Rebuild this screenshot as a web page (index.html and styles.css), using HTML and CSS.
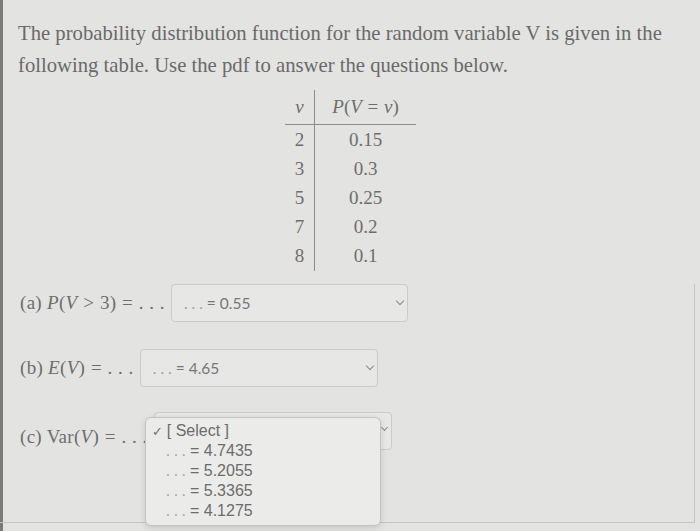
FILE: index.html
```html
<!DOCTYPE html>
<html>
<head>
<meta charset="utf-8">
<link rel="stylesheet" href="styles.css">
</head>
<body>
<div class="page">
  <p class="intro">The probability distribution function for the random variable V is given in the following table. Use the pdf to answer the questions below.</p>
  <table class="pdf">
    <tr class="head"><td class="vcol"><i>v</i></td><td class="pcol"><i>P</i>(<i>V</i><span class="rel">=</span><i>v</i>)</td></tr>
    <tr><td class="vcol">2</td><td class="pcol">0.15</td></tr>
    <tr><td class="vcol">3</td><td class="pcol">0.3</td></tr>
    <tr><td class="vcol">5</td><td class="pcol">0.25</td></tr>
    <tr><td class="vcol">7</td><td class="pcol">0.2</td></tr>
    <tr><td class="vcol">8</td><td class="pcol">0.1</td></tr>
  </table>
  <div class="quiz">
    <div class="q qa">
      <span class="label">(a) <i>P</i>(<i>V</i><span class="rel">&gt;</span>3)<span class="rel">=</span><span class="ld">. . .</span></span>
      <div class="select sa"><span class="val"><span class="dots">. . .</span> = 0.55</span><span class="chev"></span></div>
    </div>
    <div class="q qb">
      <span class="label">(b) <i>E</i>(<i>V</i>)<span class="rel">=</span><span class="ld">. . .</span></span>
      <div class="select sb"><span class="val"><span class="dots">. . .</span> = 4.65</span><span class="chev"></span></div>
    </div>
    <div class="q qc">
      <span class="label">(c) Var(<i>V</i>)<span class="rel">=</span><span class="ld">. . .</span></span>
      <div class="select sc"><span class="val"></span><span class="chev small"></span>
        <div class="popup">
          <div class="opt sel"><span class="check">✓</span>[ Select ]</div>
          <div class="opt"><span class="dots">. . .</span> = 4.7435</div>
          <div class="opt"><span class="dots">. . .</span> = 5.2055</div>
          <div class="opt"><span class="dots">. . .</span> = 5.3365</div>
          <div class="opt"><span class="dots">. . .</span> = 4.1275</div>
        </div>
      </div>
    </div>
  </div>
</div>
</body>
</html>
```
FILE: styles.css
```css
html, body {
  margin: 0;
  padding: 0;
}
body {
  width: 700px;
  height: 531px;
  overflow: hidden;
  background: #e3e3e1;
  font-family: "Liberation Serif", "Times New Roman", serif;
  color: #6e6e6e;
}
.page {
  height: 531px;
  box-sizing: border-box;
  border-left: 3px solid #7a7a7a;
  padding: 17px 0 0 15px;
  position: relative;
}
.intro {
  margin: 0;
  font-size: 20.7px;
  line-height: 32px;
  width: 665px;
  color: #6a6a6a;
}
.pdf {
  border-collapse: collapse;
  margin: 9px 0 0 267px;
  font-size: 19px;
  color: #6e6e6e;
}
.pdf td {
  height: 29.2px;
  padding: 0;
  text-align: center;
}
.pdf .head td {
  height: 34px;
  border-bottom: 1.5px solid #8c8c8c;
}
.pdf .vcol {
  width: 29px;
  border-right: 1.5px solid #8c8c8c;
}
.pdf .pcol {
  width: 101px;
}
.rel {
  margin: 0 0.3em;
}
.ld {
  letter-spacing: 0.5px;
}
.quiz {
  margin-top: 13px;
  margin-left: -18px;
  height: 239px;
  border-right: 1px solid #c4c4c2;
  border-bottom: 1px solid #c4c4c2;
  width: 695px;
  box-sizing: border-box;
  padding-left: 20px;
}
.q {
  display: flex;
  align-items: center;
  font-size: 19px;
  color: #6e6e6e;
}
.label {
  white-space: nowrap;
  letter-spacing: 0.3px;
}
.select {
  position: relative;
  box-sizing: border-box;
  height: 38px;
  border: 1px solid #cbcbc9;
  border-radius: 4px;
  background: #e7e7e5;
  display: flex;
  align-items: center;
  padding-left: 12px;
  font-family: "Lato", "Liberation Sans", sans-serif;
  font-size: 15.5px;
  color: #777777;
}
.val .dots {
  color: #a0a0a0;
}
.chev {
  position: absolute;
  right: 4px;
  top: 13px;
  width: 5px;
  height: 5px;
  border-right: 1.5px solid #8a8a8a;
  border-bottom: 1.5px solid #8a8a8a;
  transform: rotate(45deg);
}
.chev.small {
  top: 12px;
  width: 4px;
  height: 4px;
}
.sa {
  width: 237px;
  margin-left: 6px;
}
.qb {
  margin-top: 27px;
}
.sb {
  width: 238px;
  margin-left: 6px;
}
.qc {
  margin-top: 25px;
}
.qc .label {
  margin-top: 12px;
}
.sc {
  width: 238px;
  margin-left: 6px;
}
.popup {
  position: absolute;
  left: -10px;
  top: 4px;
  width: 236px;
  height: 109px;
  box-sizing: border-box;
  background: #ebebea;
  border: 1px solid #c2c2c0;
  border-radius: 6px;
  box-shadow: 0 2px 6px rgba(0, 0, 0, 0.12);
  padding-top: 3px;
  font-family: "Liberation Sans", Arial, sans-serif;
  font-size: 16px;
  color: #6c6c6c;
}
.opt {
  height: 20px;
  line-height: 20px;
  padding-left: 20px;
  white-space: nowrap;
}
.opt .dots {
  color: #a2a2a2;
  letter-spacing: -0.5px;
}
.opt.sel {
  padding-left: 6px;
}
.check {
  display: inline-block;
  width: 15px;
  font-size: 13px;
  color: #707070;
}
```
